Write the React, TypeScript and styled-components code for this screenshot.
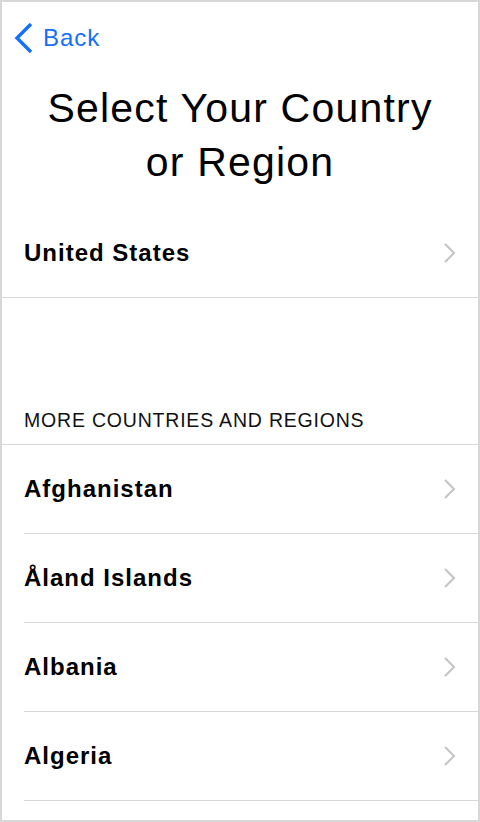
import React from "react";
import styled, { createGlobalStyle } from "styled-components";

const GlobalStyle = createGlobalStyle`
  html, body { margin: 0; padding: 0; background: #ffffff; }
  body { font-family: "Liberation Sans", Arial, Helvetica, sans-serif; -webkit-font-smoothing: antialiased; }
  * { box-sizing: border-box; }
`;

const Frame = styled.div`
  width: 480px;
  height: 822px;
  border: 2px solid #d7d7d7;
  background: #ffffff;
  overflow: hidden;
  display: flex;
  flex-direction: column;
`;

const NavBar = styled.div`
  height: 72px;
  display: flex;
  align-items: center;
  padding-left: 12px;
`;

const BackButton = styled.button`
  display: flex;
  align-items: center;
  gap: 9px;
  border: none;
  background: none;
  padding: 0;
  color: #1470fa;
  font-family: inherit;
  font-size: 24px;
  letter-spacing: 1px;
  cursor: pointer;
`;

const Title = styled.h1`
  margin: 7px 0 20px;
  font-size: 41px;
  line-height: 54px;
  font-weight: 400;
  text-align: center;
  color: #000000;
  letter-spacing: 1.2px;
`;

const Row = styled.div`
  height: 89px;
  padding-left: ${(p) => (p.$inset ? "22px" : "0")};
  display: flex;
`;

const RowInner = styled.div`
  flex: 1;
  display: flex;
  align-items: center;
  justify-content: space-between;
  padding-left: ${(p) => (p.$inset ? "0" : "22px")};
  padding-right: 22px;
  border-bottom: 1px solid #d8d8d8;
`;

const RowLabel = styled.span`
  font-size: 24px;
  font-weight: 700;
  letter-spacing: 1px;
  color: #000000;
`;

const SectionHeader = styled.div`
  height: 147px;
  display: flex;
  align-items: flex-end;
  padding: 0 0 12px 22px;
  border-bottom: 1px solid #d8d8d8;
  font-size: 19.5px;
  line-height: 24px;
  letter-spacing: 0.8px;
  color: #111111;
  text-transform: uppercase;
`;

const Chevron = () => (
  <svg width="13" height="22" viewBox="0 0 13 22" fill="none">
    <polyline points="2,2 11,11 2,20" stroke="#c3c3c8" strokeWidth="2" />
  </svg>
);

const BackChevron = () => (
  <svg width="20" height="32" viewBox="0 0 20 32" fill="none">
    <polyline points="17,2 3,16 17,30" stroke="#1470fa" strokeWidth="3.4" />
  </svg>
);

const countries = ["Afghanistan", "Åland Islands", "Albania", "Algeria"];

export default function App() {
  return (
    <>
      <GlobalStyle />
      <Frame>
        <NavBar>
          <BackButton>
            <BackChevron />
            Back
          </BackButton>
        </NavBar>
        <Title>
          Select Your Country
          <br />
          or Region
        </Title>
        <Row>
          <RowInner>
            <RowLabel>United States</RowLabel>
            <Chevron />
          </RowInner>
        </Row>
        <SectionHeader>More Countries and Regions</SectionHeader>
        {countries.map((c) => (
          <Row key={c} $inset>
            <RowInner $inset>
              <RowLabel>{c}</RowLabel>
              <Chevron />
            </RowInner>
          </Row>
        ))}
      </Frame>
    </>
  );
}
